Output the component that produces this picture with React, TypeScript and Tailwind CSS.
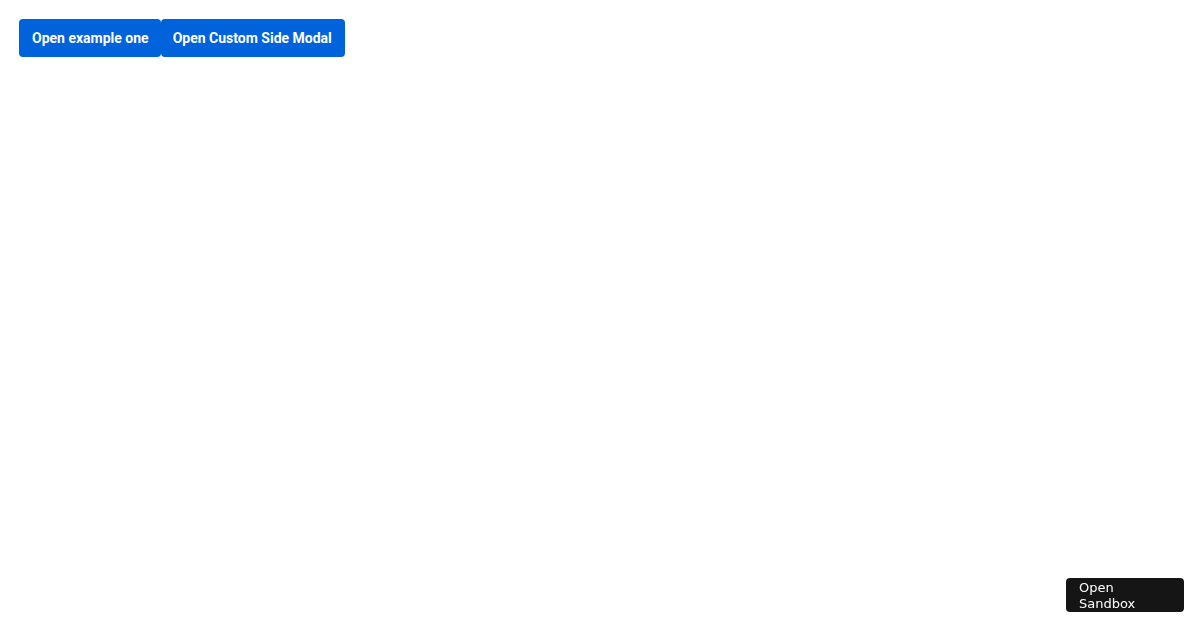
export default function App() {
  return (
    <div className="min-h-screen bg-white p-[19px] font-['Roboto',sans-serif]">
      <div className="flex">
        <button className="h-[38px] rounded-[4px] bg-[#0063dc] pl-[13px] pr-[12px] text-[14px] font-bold text-white">
          Open example one
        </button>
        <button className="h-[38px] rounded-[4px] bg-[#0063dc] pl-[12px] pr-[13px] text-[14px] font-bold text-white">
          Open Custom Side Modal
        </button>
      </div>
      <a className="fixed bottom-[18px] right-[16px] h-[34px] w-[118px] rounded-[4px] bg-[#151515] px-[13px] pt-[2px] text-[13px] leading-[16px] text-white font-['DejaVu_Sans',sans-serif]">
        Open Sandbox
      </a>
    </div>
  );
}
